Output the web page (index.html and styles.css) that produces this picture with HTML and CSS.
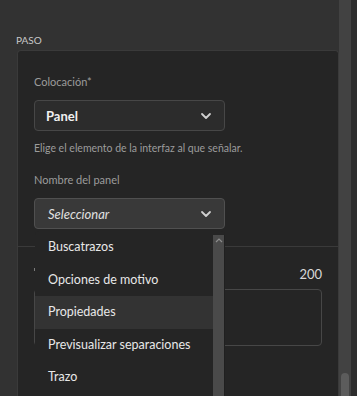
FILE: index.html
```html
<!DOCTYPE html>
<html lang="es">
<head>
  <meta charset="UTF-8" />
  <meta name="viewport" content="width=device-width, initial-scale=1.0"/>
  <title>Paso</title>
  <link rel="stylesheet" href="styles.css">
</head>
<body>
  <div class="app">
    <main class="content">
      <div class="paso">PASO</div>

      <section class="card">
        <!-- Colocación -->
        <div class="field">
          <label class="label">Colocación*</label>
          <div class="select">
            <span class="valor">Panel</span>
            <svg class="chevron" width="12" height="8" viewBox="0 0 12 8"><path d="M2 2 L6 6 L10 2" fill="none" stroke="#d0d0d0" stroke-width="1.8" stroke-linecap="round" stroke-linejoin="round"/></svg>
          </div>
          <p class="ayuda">Elige el elemento de la interfaz al que señalar.</p>
        </div>

        <!-- Nombre del panel -->
        <div class="field field-panel">
          <label class="label">Nombre del panel</label>
          <div class="select-wrap">
            <div class="select abierto">
              <span class="placeholder">Seleccionar</span>
              <svg class="chevron" width="12" height="8" viewBox="0 0 12 8"><path d="M2 2 L6 6 L10 2" fill="none" stroke="#d0d0d0" stroke-width="1.8" stroke-linecap="round" stroke-linejoin="round"/></svg>
            </div>
            <div class="menu">
              <ul class="opciones">
                <li>Buscatrazos</li>
                <li>Opciones de motivo</li>
                <li class="activo">Propiedades</li>
                <li>Previsualizar separaciones</li>
                <li>Trazo</li>
              </ul>
              <div class="menu-scroll">
                <svg width="8" height="5" viewBox="0 0 8 5"><path d="M1 4 L4 1 L7 4" fill="none" stroke="#8c8c8c" stroke-width="1.2"/></svg>
              </div>
            </div>
          </div>
        </div>

        <div class="divider"></div>

        <!-- Texto (la etiqueta queda tapada por el menú) -->
        <div class="field">
          <div class="fila">
            <span class="marca"></span>
            <span class="contador">200</span>
          </div>
          <div class="textarea"></div>
        </div>
      </section>
    </main>

    <div class="scrollbar"><div class="thumb"></div></div>
    <div class="borde"></div>
  </div>
</body>
</html>
```

FILE: styles.css
```css
body {
  margin: 0;
  padding: 0;
  background: #323232;
  font-family: 'Lato', 'Noto Sans', sans-serif;
  color: #e6e6e6;
  overflow: hidden;
}

.app {
  display: flex;
  height: 396px;
  overflow: hidden;
}

.content {
  width: 339px;
  padding: 34px 0 0 16px;
  box-sizing: border-box;
  display: flex;
  flex-direction: column;
}

.paso {
  font-size: 10px;
  line-height: 12px;
  color: #c8c8c8;
  margin-bottom: 4px;
}

/* Tarjeta */
.card {
  flex: 1;
  margin-left: 1px;
  background: #252525;
  border: 1px solid #3a3a3a;
  border-bottom: none;
  border-radius: 4px 4px 0 0;
  padding: 24px 16px 0 16px;
}

.label {
  display: block;
  font-size: 11px;
  line-height: 14px;
  color: #9c9c9c;
}

.select {
  display: flex;
  align-items: center;
  justify-content: space-between;
  width: 191px;
  height: 31px;
  box-sizing: border-box;
  margin-top: 11px;
  padding: 0 12px 0 11px;
  background: #2c2c2c;
  border: 1px solid #474747;
  border-radius: 4px;
}

.valor {
  font-size: 13px;
  font-weight: bold;
  color: #f0f0f0;
}

.select.abierto {
  background: #393939;
  border-color: #505050;
  padding-left: 13px;
}

.placeholder {
  font-size: 13px;
  font-style: italic;
  color: #e0e0e0;
}

.ayuda {
  margin: 10px 0 0;
  font-size: 10.5px;
  line-height: 14px;
  color: #9c9c9c;
}

.field-panel {
  margin-top: 18px;
}

.select-wrap {
  position: relative;
}

/* Menú desplegable */
.menu {
  position: absolute;
  top: 33px;
  left: 1px;
  width: 190px;
  height: 165px;
  display: flex;
  background: #252525;
  border-radius: 4px 4px 0 0;
  z-index: 2;
}

.opciones {
  list-style: none;
  margin: 0;
  padding: 0;
  flex: 1;
}

.opciones li {
  height: 32.5px;
  line-height: 32.5px;
  padding-left: 13px;
  font-size: 12.5px;
  color: #e8e8e8;
}

.opciones li.activo {
  background: #333333;
}

.menu-scroll {
  width: 12px;
  margin-top: 4px;
  background: #4a4a4a;
  border-right: 1px solid #202020;
  display: flex;
  justify-content: center;
  padding-top: 3px;
  box-sizing: border-box;
}

.menu-scroll svg {
  display: block;
}

.divider {
  height: 1px;
  background: #3a3a3a;
  margin: 17px -16px 0;
}

.fila {
  display: flex;
  justify-content: space-between;
  align-items: flex-start;
  margin-top: 20px;
  line-height: 14px;
}

.marca {
  width: 1px;
  height: 3px;
  margin-top: 1px;
  background: #7a7a7a;
}

.contador {
  font-size: 13px;
  color: #d8d8d8;
}

.textarea {
  margin-top: 8px;
  height: 57px;
  box-sizing: border-box;
  border: 1px solid #474747;
  border-radius: 4px;
}

/* Barra de desplazamiento */
.scrollbar {
  width: 12px;
  background: #424242;
  position: relative;
}

.thumb {
  position: absolute;
  left: 2px;
  right: 2px;
  top: 373px;
  height: 40px;
  background: #5c5c5c;
  border-radius: 4px;
}

.borde {
  flex: 1;
  background: #2d2d2d;
}
```
